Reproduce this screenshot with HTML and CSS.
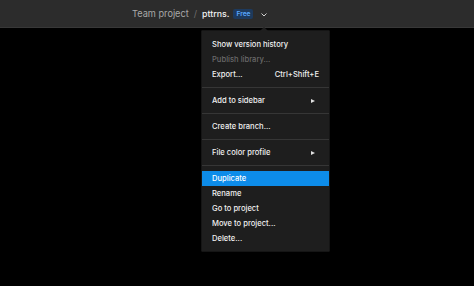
FILE: index.html
```html
<!DOCTYPE html>
<html>
<head>
    <title>pttrns.</title>
    <link rel="stylesheet" href="styles.css">
</head>
<body>
    <div class="topbar">
        <span class="project">Team project</span>
        <span class="slash">/</span>
        <span class="file-name">pttrns.</span>
        <span class="badge">Free</span>
        <svg class="chevron" width="6" height="4" viewBox="0 0 6 4">
            <path d="M0.5 0.5 L3 3 L5.5 0.5" fill="none" stroke="#d0d0d0" stroke-width="1"/>
        </svg>
    </div>

    <div class="menu">
        <div class="notch"></div>
        <div class="item">Show version history</div>
        <div class="item disabled">Publish library...</div>
        <div class="item">Export...<span class="shortcut">Ctrl+Shift+E</span></div>
        <div class="sep"></div>
        <div class="item">Add to sidebar<span class="arrow"></span></div>
        <div class="sep"></div>
        <div class="item">Create branch...</div>
        <div class="sep"></div>
        <div class="item">File color profile<span class="arrow"></span></div>
        <div class="sep"></div>
        <div class="item active">Duplicate</div>
        <div class="item">Rename</div>
        <div class="item">Go to project</div>
        <div class="item">Move to project...</div>
        <div class="item">Delete...</div>
    </div>
</body>
</html>
```

FILE: styles.css
```css
body {
    margin: 0;
    background: #000;
    font-family: Inter, "Noto Sans", sans-serif;
    width: 474px;
    height: 286px;
    overflow: hidden;
}
.topbar {
    height: 27px;
    background: #2c2c2c;
    border-bottom: 1px solid #383838;
    display: flex;
    align-items: center;
    padding-left: 132px;
    font-size: 9.2px;
}
.project {
    color: #a8a8a8;
}
.slash {
    color: #6e6e6e;
    margin: 0 5px 0 5px;
}
.file-name {
    color: #f2f2f2;
    font-weight: 500;
    font-size: 8.8px;
}
.badge {
    margin-left: 4px;
    background: #1d3a5e;
    color: #5aa8ff;
    font-size: 6.6px;
    font-weight: 600;
    padding: 1px 3px;
    border-radius: 2px;
}
.chevron {
    margin-left: 8px;
    margin-top: 3px;
}
.menu {
    position: relative;
    margin: 3px 0 0 202px;
    width: 127px;
    background: #1e1e1e;
    padding: 6px 0 5px 0;
    box-sizing: border-box;
    font-size: 7.6px;
    color: #f0f0f0;
    box-shadow: 0 0 0 0.5px #2a2a2a;
}
.notch {
    position: absolute;
    top: -4px;
    left: 58px;
    width: 0;
    height: 0;
    border-left: 4px solid transparent;
    border-right: 4px solid transparent;
    border-bottom: 4px solid #1e1e1e;
}
.item {
    height: 15px;
    display: flex;
    align-items: center;
    justify-content: space-between;
    padding: 0 10px 0 10px;
    font-weight: 500;
}
.item.disabled {
    color: #6a6a6a;
}
.item.active {
    background: #0d8ce9;
    color: #fff;
}
.shortcut {
    color: #f0f0f0;
}
.arrow {
    width: 0;
    height: 0;
    margin-right: 4px;
    border-top: 2.5px solid transparent;
    border-bottom: 2.5px solid transparent;
    border-left: 4px solid #e0e0e0;
}
.sep {
    height: 1px;
    background: #363636;
    margin: 5px 0;
}
```
